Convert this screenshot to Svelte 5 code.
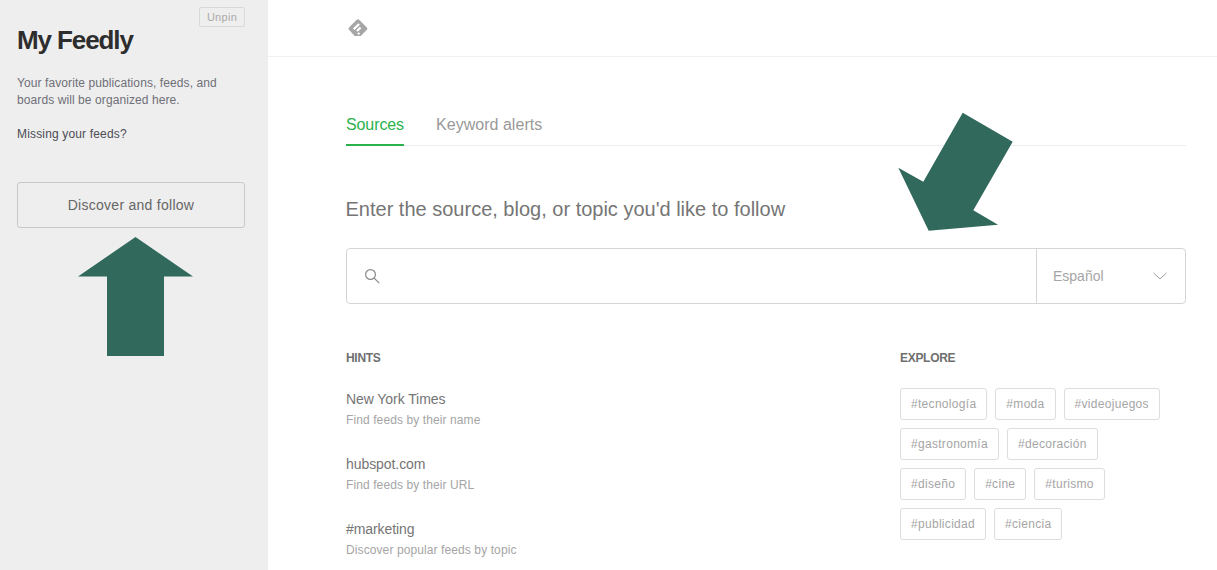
<script>
	const hints = [
		{ title: 'New York Times', sub: 'Find feeds by their name' },
		{ title: 'hubspot.com', sub: 'Find feeds by their URL' },
		{ title: '#marketing', sub: 'Discover popular feeds by topic' }
	];
	const tags = ['#tecnología', '#moda', '#videojuegos', '#gastronomía', '#decoración', '#diseño', '#cine', '#turismo', '#publicidad', '#ciencia'];
</script>

<div class="page">
	<aside class="sidebar">
		<div class="unpin-row"><button class="unpin">Unpin</button></div>
		<h1>My Feedly</h1>
		<p class="intro">Your favorite publications, feeds, and boards will be organized here.</p>
		<p class="missing">Missing your feeds?</p>
		<button class="discover">Discover and follow</button>
	</aside>

	<main class="content">
		<header class="topbar">
			<svg class="logo" width="20" height="18" viewBox="0 0 22 20" preserveAspectRatio="none">
				<path fill="#a6a6a6" d="M9.3 1.2a2.2 2.2 0 0 1 3.2 0l8 8a2.2 2.2 0 0 1 0 3.1l-5.9 6a2.6 2.6 0 0 1-1.8.7H8.6a2.6 2.6 0 0 1-1.8-.7l-5.4-6a2.2 2.2 0 0 1 0-3.1z"/>
				<path fill="#fff" d="M11.4 4.6l1.7 1.7-6 6-1.7-1.7zM13 8.6l1.7 1.7-4 4-1.7-1.7zM11.8 14.6l1.6 1.6-1.6 1.6-1.6-1.6z"/>
			</svg>
		</header>

		<div class="body">
			<nav class="tabs">
				<span class="tab active">Sources</span>
				<span class="tab">Keyword alerts</span>
			</nav>

			<h2>Enter the source, blog, or topic you'd like to follow</h2>

			<div class="search">
				<div class="field">
					<svg width="16" height="16" viewBox="0 0 16 16" fill="none" stroke="#8a8a8a" stroke-width="1.2">
						<circle cx="6.5" cy="6.5" r="4.9"/>
						<path d="M10.2 10.2l5 5"/>
					</svg>
				</div>
				<div class="lang">
					<span>Español</span>
					<svg width="14" height="8" viewBox="0 0 14 8" fill="none" stroke="#a0a0a0" stroke-width="1">
						<path d="M.5.8L7 7l6.5-6.2"/>
					</svg>
				</div>
			</div>

			<div class="columns">
				<section class="hints">
					<h3>HINTS</h3>
					{#each hints as hint}
						<div class="hint">
							<div class="hint-title">{hint.title}</div>
							<div class="hint-sub">{hint.sub}</div>
						</div>
					{/each}
				</section>
				<section class="explore">
					<h3>EXPLORE</h3>
					<div class="tags">
						{#each tags as tag}
							<span class="tag">{tag}</span>
						{/each}
					</div>
				</section>
			</div>
		</div>
	</main>

	<!-- annotation arrows drawn over the page -->
	<svg class="arrows" width="1217" height="570" viewBox="0 0 1217 570">
		<path fill="#31695d" d="M135.5 237L193 276.5H164V356H107V276.5H78z"/>
		<path fill="#31695d" d="M962.7 112.7L1012.7 141.7L973.3 210.3L998 224.7L928.7 230.7L898.3 167.7L923.3 181.7z"/>
	</svg>
</div>

<style>
:global(body) {
	margin: 0;
	background: #fff;
}
.page {
	position: relative;
	display: flex;
	width: 1217px;
	height: 570px;
	overflow: hidden;
	font-family: "Liberation Sans", Arial, sans-serif;
}
.sidebar {
	width: 268px;
	flex: none;
	box-sizing: border-box;
	padding: 7px 23px 0 17px;
	background: #eee;
}
.unpin-row {
	display: flex;
	justify-content: flex-end;
}
.unpin {
	width: 46px;
	height: 20px;
	padding: 0;
	border: 1px solid #d9d9d9;
	border-radius: 2px;
	background: transparent;
	color: #aaa;
	font: 11px "Liberation Sans", Arial, sans-serif;
	letter-spacing: 0.3px;
}
h1 {
	margin: -3px 0 0;
	color: #2d2d2d;
	font-size: 26px;
	line-height: 32px;
	font-weight: 700;
	letter-spacing: -1.1px;
}
.intro {
	margin: 19px 0 0;
	color: #6f6f78;
	font-size: 12px;
	line-height: 17px;
	letter-spacing: 0.09px;
}
.missing {
	margin: 17px 0 0;
	color: #4c4c55;
	font-size: 12px;
	line-height: 17px;
	letter-spacing: 0.16px;
}
.discover {
	display: block;
	width: 228px;
	height: 46px;
	margin-top: 39px;
	padding: 0;
	border: 1px solid #c8c8c8;
	border-radius: 3px;
	background: transparent;
	color: #666;
	font: 14px "Liberation Sans", Arial, sans-serif;
	letter-spacing: 0.27px;
}
.content {
	flex: 1;
	min-width: 0;
}
.topbar {
	height: 57px;
	box-sizing: border-box;
	padding: 19px 0 0 80px;
	border-bottom: 1px solid #f1f1f1;
}
.logo {
	display: block;
}
.body {
	width: 840px;
	margin-left: 78px;
}
.tabs {
	display: flex;
	gap: 32px;
	height: 89px;
	box-sizing: border-box;
	padding-top: 58px;
	border-bottom: 1px solid #eee;
}
.tab {
	height: 29px;
	color: #999;
	font-size: 16px;
	line-height: 20px;
	letter-spacing: 0.03px;
}
.tab.active {
	width: 58px;
	color: #2bb24c;
	border-bottom: 2px solid #2bb24c;
	letter-spacing: -0.1px;
}
h2 {
	margin: 51px 0 0 -0.5px;
	color: #757575;
	font-size: 20px;
	line-height: 24px;
	font-weight: 400;
}
.search {
	display: flex;
	height: 56px;
	box-sizing: border-box;
	margin-top: 27px;
	border: 1px solid #d4d4d4;
	border-radius: 4px;
}
.field {
	flex: 1;
	display: flex;
	align-items: center;
	padding-left: 17px;
}
.lang {
	width: 149px;
	box-sizing: border-box;
	display: flex;
	align-items: center;
	justify-content: space-between;
	padding: 0 18px 0 16px;
	border-left: 1px solid #d4d4d4;
	color: #a5a5a5;
	font-size: 14px;
}
.columns {
	display: flex;
	margin-top: 47px;
}
.hints {
	width: 554px;
	flex: none;
}
h3 {
	margin: 0;
	color: #6f6f6f;
	font-size: 12px;
	line-height: 14px;
	font-weight: 700;
	letter-spacing: -0.3px;
}
.hint {
	margin-top: 24px;
}
.hint + .hint {
	margin-top: 26px;
}
.hint-title {
	color: #757575;
	font-size: 14px;
	line-height: 20px;
	letter-spacing: -0.07px;
}
.hint-sub {
	margin-top: 3px;
	color: #a5a5a5;
	font-size: 12px;
	line-height: 16px;
	letter-spacing: 0.1px;
}
.explore {
	flex: 1;
}
.tags {
	display: flex;
	flex-wrap: wrap;
	gap: 8px;
	margin-top: 23px;
	width: 265px;
}
.tag {
	box-sizing: border-box;
	height: 32px;
	padding: 0 10px;
	border: 1px solid #ddd;
	border-radius: 3px;
	color: #a5a5a5;
	font-size: 12px;
	line-height: 30px;
	letter-spacing: 0.3px;
}
.arrows {
	position: absolute;
	left: 0;
	top: 0;
	pointer-events: none;
}
</style>
